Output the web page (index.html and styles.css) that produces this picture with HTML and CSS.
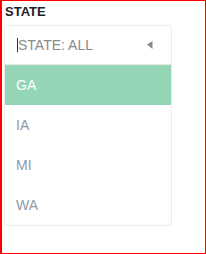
FILE: index.html
```html
<!DOCTYPE html>
<html lang="en">
<head>
  <meta charset="UTF-8">
  <title>State filter</title>
  <link rel="stylesheet" href="styles.css">
</head>
<body>
  <div class="frame">
    <div class="label">STATE</div>
    <div class="dropdown">
      <div class="dropdown-head">
        <span class="caret"></span>
        <span class="placeholder">STATE: ALL</span>
        <svg class="arrow" width="6" height="8" viewBox="0 0 6 8">
          <polygon points="5.5,0 5.5,8 0,3.5" fill="#8c8c8c"/>
        </svg>
      </div>
      <ul class="options">
        <li class="option active">GA</li>
        <li class="option">IA</li>
        <li class="option">MI</li>
        <li class="option">WA</li>
      </ul>
    </div>
  </div>
</body>
</html>
```

FILE: styles.css
```css
html, body {
  margin: 0;
  padding: 0;
}

body {
  font-family: "Liberation Sans", Arial, sans-serif;
  background: #ffffff;
}

.frame {
  box-sizing: border-box;
  width: 206px;
  height: 254px;
  border: 1px solid #ff0000;
  border-left-width: 2px;
  padding: 3px 0 0 2px;
}

.label {
  font-size: 13px;
  font-weight: bold;
  color: #222;
  line-height: 15px;
  margin-left: 1px;
}

.dropdown {
  width: 166px;
  margin-top: 6px;
  border: 1px solid #ececec;
  border-radius: 4px;
  background: #fff;
  overflow: hidden;
}

.dropdown-head {
  display: flex;
  align-items: center;
  height: 38px;
  padding: 0 0 0 12px;
  border-bottom: 1px solid #e6e6e6;
}

.caret {
  width: 1px;
  height: 14px;
  background: #333;
}

.placeholder {
  font-size: 14px;
  color: #8a8a8a;
  flex: 1;
}

.arrow {
  margin-right: 18px;
}

.options {
  list-style: none;
  margin: 0;
  padding: 0;
}

.option {
  height: 40px;
  line-height: 40px;
  padding-left: 11px;
  font-size: 14px;
  color: #8f99a8;
}

.option.active {
  background: #93d5b5;
  color: #ffffff;
}
```
